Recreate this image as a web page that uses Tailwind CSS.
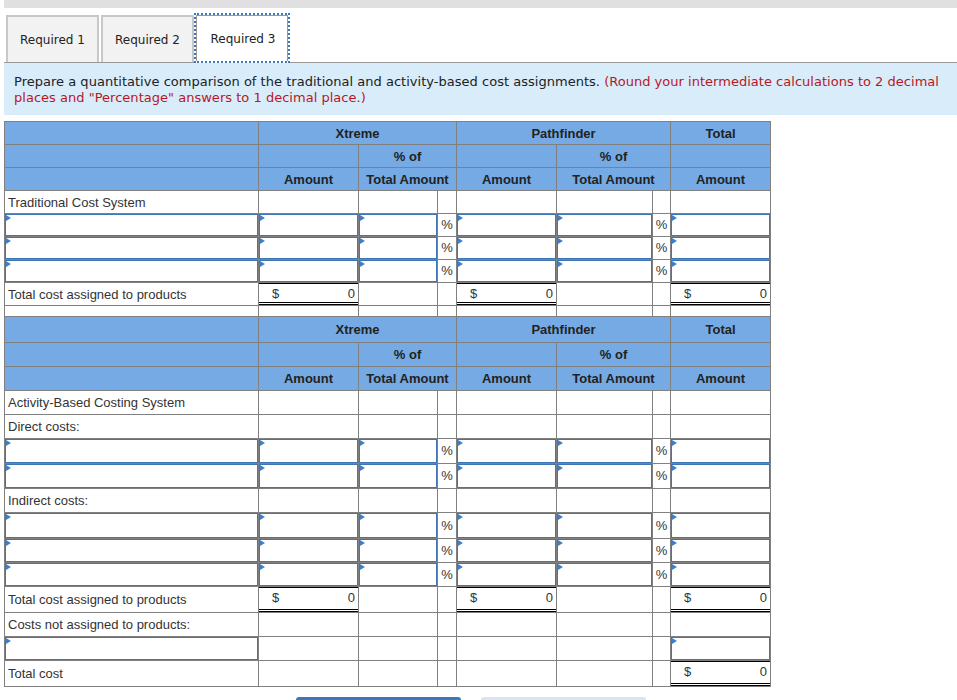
<!DOCTYPE html>
<html lang="en">
<head>
  <meta charset="UTF-8" />
  <title>Required 3</title>
  <script src="https://cdn.jsdelivr.net/npm/@tailwindcss/browser@4"></script>
</head>
<body class="h-[700px] overflow-hidden bg-white font-['Liberation_Sans',Arial,sans-serif]">
  <div class="ml-1 h-2 bg-[#e0e0e0]"></div>

  <!-- tabs -->
  <div class="flex h-[54px] items-end gap-[2px] pl-[6px] font-['DejaVu_Sans',Verdana,sans-serif] text-[12px] text-[#222]">
    <div class="flex h-[47px] w-[93px] items-center justify-center border-2 border-b-0 border-[#c8c8c8] bg-[#f2f2f2]">Required 1</div>
    <div class="flex h-[47px] w-[93px] items-center justify-center border-2 border-b-0 border-[#c8c8c8] bg-[#f2f2f2]">Required 2</div>
    <div class="relative z-10 -mb-px -ml-[2px] h-[50px] w-[96px] border-2 border-dotted border-[#3f76b5] bg-white">
      <div class="flex h-full items-center justify-center border border-b-0 border-[#999] pl-[2px] pt-px">Required 3</div>
    </div>
  </div>

  <!-- instructions -->
  <div class="ml-1 h-[53px] border-t border-[#999] bg-[#d9ecfa] px-[10px] pt-[11px] font-['DejaVu_Sans',Verdana,sans-serif] text-[13px] leading-[16px] tracking-[0.02px] text-[#222]">
    Prepare a quantitative comparison of the traditional and activity-based cost assignments. <span class="text-[#b5191f]">(Round your intermediate calculations to 2 decimal places and "Percentage" answers to 1 decimal place.)</span>
  </div>

  <table class="ml-1 mt-[6px] w-[766px] table-fixed text-[13px] text-[#333]">
    <colgroup>
      <col class="w-[254px]" /><col class="w-[100px]" /><col class="w-[79px]" /><col class="w-[19px]" />
      <col class="w-[100px]" /><col class="w-[96px]" /><col class="w-[18px]" /><col class="w-[100px]" />
    </colgroup>
    <tbody id="rows"></tbody>
  </table>

  <div class="ml-[296px] mt-[10px] flex gap-5">
    <div class="h-9 w-[165px] rounded-t-[3px] bg-[#3f76b5]"></div>
    <div class="h-9 w-[165px] rounded-t-[3px] bg-[#d9e5f3]"></div>
  </div>

  <script>
    const line = 'border border-[#808080]';

    const head = (h, cells, pad = '') => `<tr class="${h} bg-[#75aae4] text-center font-bold text-[#222]">${cells.map(([text, span]) =>
      `<td colspan="${span}" class="${line} p-0 ${pad}">${text}</td>`).join('')}</tr>`;

    const head1 = (h, pad) => head(h, [['', 1], ['Xtreme', 3], ['Pathfinder', 3], ['Total', 1]], pad);
    const head2 = (h, pad) => head(h, [['', 1], ['', 1], ['% of', 2], ['', 1], ['% of', 2], ['', 1]], pad);
    const head3 = (h, pad) => head(h, [['', 1], ['Amount', 1], ['Total Amount', 2], ['Amount', 1], ['Total Amount', 2], ['Amount', 1]], pad);

    const empty = () => `<td class="${line} p-0"></td>`;

    const label = (text, pad = '') => `<td class="${line} p-0 pl-[3px] ${pad}">${text}</td>`;

    const box = inp => `<td class="${line} p-0"><div class="relative">
      <input class="block w-full ${inp} border border-[#3f76b5] bg-white" />
      <span class="absolute left-[1px] top-[1px] border-y-[3.5px] border-l-[5px] border-y-transparent border-l-[#3f7fc8]"></span>
    </div></td>`;

    const pct = () => `<td class="${line} p-0 text-center">%</td>`;

    const sum = inner => `<td class="${line} p-0"><div class="flex ${inner} justify-between border-t border-b-[3px] border-t-black border-b-black [border-bottom-style:double] pl-[13px] pr-[3px]"><span>$</span><span>0</span></div></td>`;

    // label, three amount boxes and two percent cells
    const inputRow = (h, inp) => `<tr class="${h}">${box(inp)}${box(inp)}${box(inp)}${pct()}${box(inp)}${box(inp)}${pct()}${box(inp)}</tr>`;

    const textRow = (h, text, pad) => `<tr class="${h}">${label(text, pad)}${empty().repeat(7)}</tr>`;

    const totalRow = (h, inner, text, pad) => `<tr class="${h}">${label(text, pad)}${sum(inner)}${empty()}${empty()}${sum(inner)}${empty()}${empty()}${sum(inner)}</tr>`;

    document.getElementById('rows').innerHTML = [
      head1('h-[23px]', 'pt-px'), head2('h-[23px]', 'pt-px'), head3('h-[23px]', 'pt-px'),
      textRow('h-[23px]', 'Traditional Cost System', 'pt-px'),
      inputRow('h-[23px]', 'h-[22px]'),
      inputRow('h-[23px]', 'h-[22px]'),
      inputRow('h-[23px]', 'h-[22px]'),
      totalRow('h-[23px]', 'h-[22px]', 'Total cost assigned to products', 'pt-px'),
      textRow('h-[11px]', ''),
      head1('h-[26px]'), head2('h-[24px]'), head3('h-[24px]'),
      textRow('h-[24px]', 'Activity-Based Costing System'),
      textRow('h-[24px]', 'Direct costs:'),
      inputRow('h-[25px]', 'h-[24px]'),
      inputRow('h-[25px]', 'h-[24px]'),
      textRow('h-[24px]', 'Indirect costs:'),
      inputRow('h-[26px]', 'h-[25px]'),
      inputRow('h-[24px]', 'h-[23px]'),
      inputRow('h-[24px]', 'h-[23px]'),
      totalRow('h-[26px]', 'h-[25px]', 'Total cost assigned to products'),
      textRow('h-[24px]', 'Costs not assigned to products:'),
      `<tr class="h-[24px]">${box('h-[23px]')}${empty().repeat(6)}${box('h-[23px]')}</tr>`,
      `<tr class="h-[26px]">${label('Total cost')}${empty().repeat(6)}${sum('h-[25px]')}</tr>`,
    ].join('');
  </script>
</body>
</html>
